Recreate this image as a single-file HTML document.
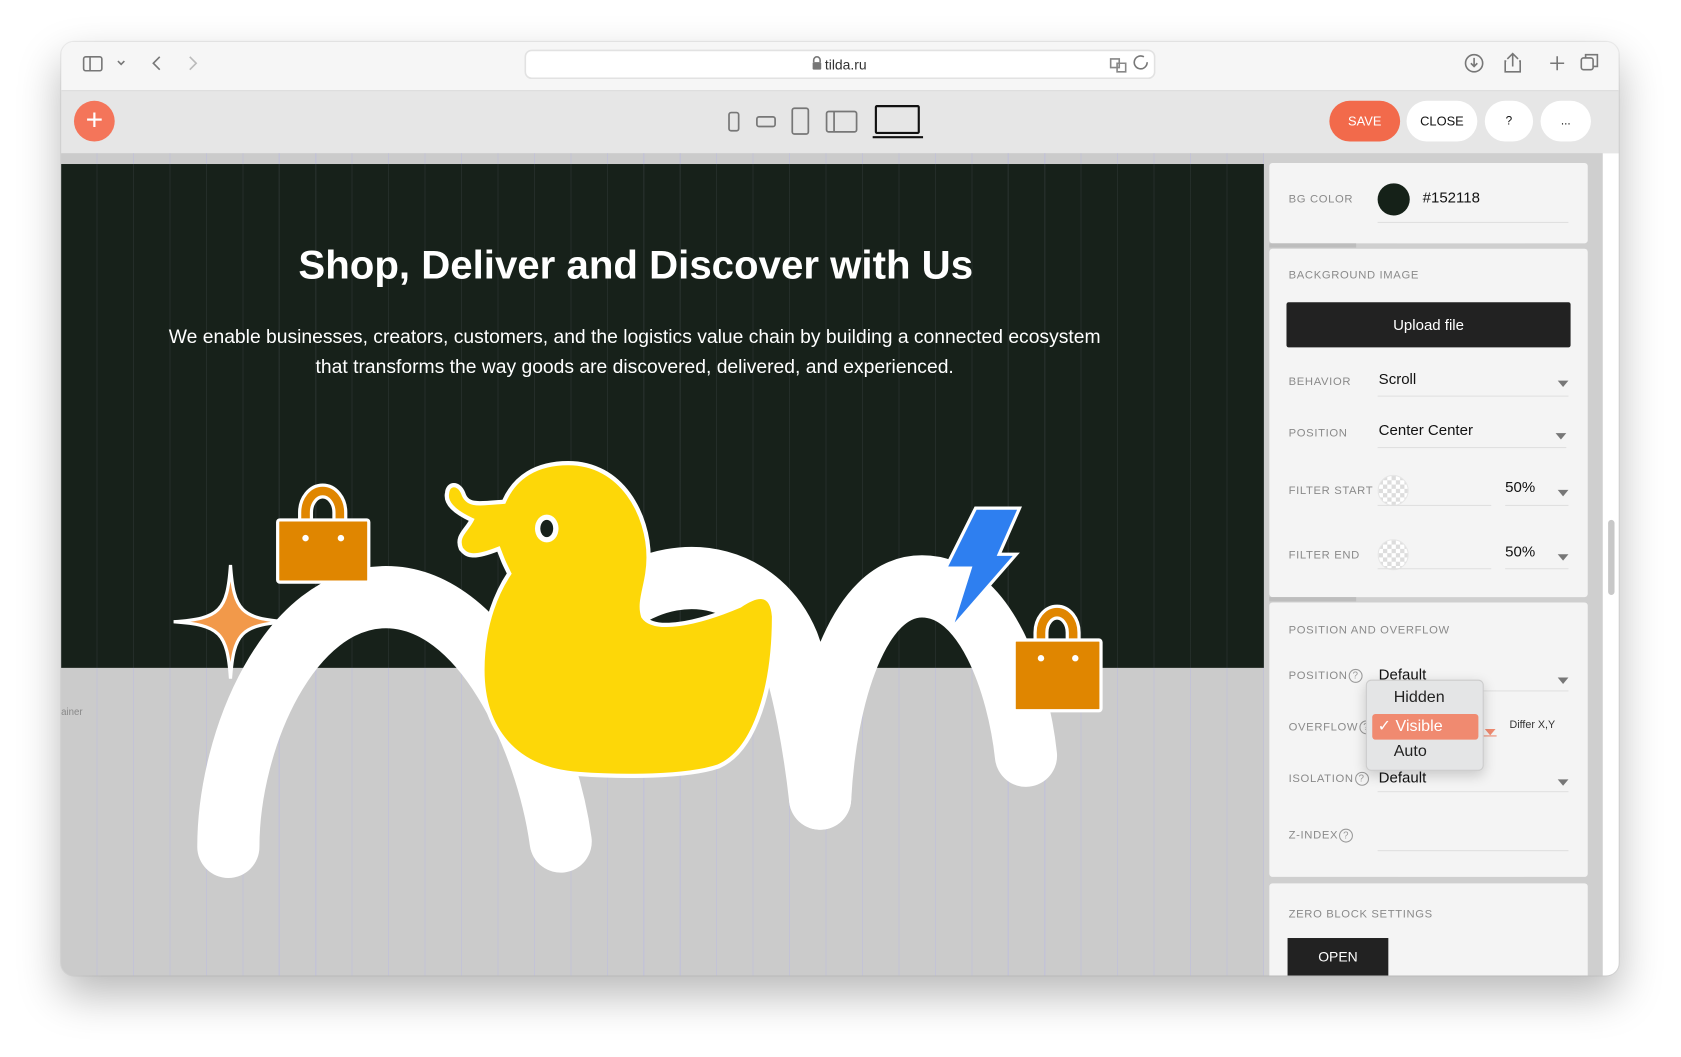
<!DOCTYPE html>
<html><head><meta charset="utf-8"><style>
*{box-sizing:border-box;margin:0;padding:0}
html,body{width:1681px;height:1057px;overflow:hidden;background:#fff;font-family:"Liberation Sans",sans-serif}
#s{position:absolute;left:0;top:0;width:1568px;height:986px;transform:scale(1.07207,1.07201);transform-origin:0 0}
.a{position:absolute}
.win{left:57px;top:39px;width:1453px;height:871px;border-radius:12px;overflow:hidden;box-shadow:0 18px 40px rgba(0,0,0,.28),0 0 0 1px rgba(0,0,0,.06);background:#cfcfcf}
.lbl{position:absolute;left:18px;font-size:10.5px;letter-spacing:.6px;color:#8a8a8a}
.val{position:absolute;left:102px;font-size:14px;color:#111}
.ul{position:absolute;height:1px;background:#e0e0e0}
.arr{position:absolute;width:0;height:0;border-left:5px solid transparent;border-right:5px solid transparent;border-top:6px solid #777}
.card{position:absolute;left:5px;width:297px;background:#f4f4f4;border-radius:3px}
.q{display:inline-block;width:13px;height:13px;border:1px solid #999;border-radius:50%;font-size:9px;text-align:center;line-height:11px;color:#999;vertical-align:middle;margin-left:1px}
.chk{position:absolute;width:29px;height:29px;border-radius:50%;background:repeating-conic-gradient(#ddd 0 25%,#fff 0 50%) 0 0/8px 8px;border:1px solid #e6e6e6}
</style></head><body><div id="s">
<div class="a win">
 <div class="a" style="left:0;top:0;width:1453px;height:46px;background:#f6f6f6;border-bottom:1px solid #ddd"></div>
 <svg class="a" style="left:0;top:0" width="1453" height="46" fill="none" stroke="#777" stroke-width="1.5">
  <rect x="21" y="14" width="17" height="13" rx="2"/><line x1="27" y1="14" x2="27" y2="27"/>
  <path d="M53 18l3 3 3-3"/><path d="M92 14l-6 6 6 6"/><path d="M120 14l6 6-6 6" stroke="#bbb"/>
  <rect x="433" y="8" width="587" height="26" rx="6" fill="#fff" stroke="#e2e2e2"/>
  <rect x="701" y="19" width="8" height="7" rx="1" fill="#777" stroke="none"/><path d="M702 19v-2a3 3 0 0 1 6 0v2"/>
  <circle cx="1318" cy="20" r="8"/><path d="M1318 15v8M1315 20l3 3 3-3"/>
  <path d="M1349 16l5-5 5 5M1354 11v12M1348 18h-1v10h14v-10h-1"/>
  <path d="M1389 20h13M1395.5 13.5v13"/>
  <rect x="1418" y="15" width="11" height="11" rx="2"/><path d="M1422 15v-3h11v11h-4"/>
  <path d="M979 16h8v8h-8zM985 20h8v8h-8z" stroke="#888"/><path d="M1010 14a6 6 0 1 0 3 5" />
 </svg>
 <div class="a" style="left:0;top:14px;width:1453px;text-align:center;font-size:13px;color:#333">&nbsp;&nbsp;&nbsp;tilda.ru</div>
 <div class="a" style="left:0;top:46px;width:1453px;height:58px;background:#e6e6e6"></div>
 <div class="a" style="left:12px;top:55px;width:38px;height:38px;border-radius:50%;background:#f4755a;color:#fff;font-size:28px;line-height:36px;text-align:center">+</div>
 <svg class="a" style="left:600px;top:55px" width="210" height="40" fill="none" stroke="#777" stroke-width="1.6">
  <rect x="23" y="11" width="9" height="17" rx="2"/><rect x="49" y="15" width="17" height="9" rx="2"/>
  <rect x="82" y="7" width="15" height="24" rx="2"/><rect x="114" y="10" width="28" height="19" rx="2"/><line x1="121" y1="10" x2="121" y2="29"/>
  <rect x="160" y="5" width="40" height="25" rx="1" stroke="#111" stroke-width="2"/><line x1="157" y1="34" x2="204" y2="34" stroke="#111" stroke-width="2"/>
 </svg>
 <div class="a" style="left:1183px;top:55px;width:66px;height:38px;border-radius:19px;background:#f26a4b;color:#fff;font-size:12px;line-height:38px;text-align:center">SAVE</div>
 <div class="a" style="left:1255px;top:55px;width:66px;height:38px;border-radius:19px;background:#fff;color:#111;font-size:12px;line-height:38px;text-align:center">CLOSE</div>
 <div class="a" style="left:1328px;top:55px;width:45px;height:38px;border-radius:19px;background:#fff;color:#111;font-size:11px;line-height:38px;text-align:center">?</div>
 <div class="a" style="left:1380px;top:55px;width:47px;height:38px;border-radius:19px;background:#fff;color:#111;font-size:11px;line-height:38px;text-align:center">...</div>
 <div class="a" style="left:0;top:104px;width:1122px;height:767px;background:#cbcbcb;background-image:repeating-linear-gradient(90deg,transparent 0 33px,#c3c3d6 33px 34px)"></div>
 <div class="a" style="left:0;top:114px;width:1122px;height:470px;background:#17211a;background-image:repeating-linear-gradient(90deg,transparent 0 33px,rgba(190,190,220,.08) 33px 34px)"></div>
 <div class="a" style="left:0;top:620px;font-size:9px;color:#888">ainer</div>
 <div class="a" style="left:0;top:187px;width:1072px;text-align:center;color:#fff;font-size:37.5px;font-weight:bold">Shop, Deliver and Discover with Us</div>
 <div class="a" style="left:60px;top:261px;width:950px;text-align:center;color:#fff;font-size:18px;line-height:28px">We enable businesses, creators, customers, and the logistics value chain by building a connected ecosystem<br>that transforms the way goods are discovered, delivered, and experienced.</div>
 <svg class="a" style="left:-57px;top:-39px" width="1200" height="950">
  <path d="M213 790 C213 690 270 557 360 557 C450 557 510 690 523 785" fill="none" stroke="#fff" stroke-width="58" stroke-linecap="round"/>
  <path d="M580 560 C640 520 710 540 735 600 C750 640 760 700 765 745" fill="none" stroke="#fff" stroke-width="58" stroke-linecap="round"/>
  <path d="M765 745 C770 650 800 547 860 547 C920 547 950 640 957 705" fill="none" stroke="#fff" stroke-width="58" stroke-linecap="round"/>
  <path d="M215 527 C218 570 225 577 268 580 C225 583 218 590 215 633 C212 590 205 583 162 580 C205 577 212 570 215 527Z" fill="#f2994a" stroke="#fff" stroke-width="3"/>
  <g stroke="#fff" stroke-width="3"><path d="M285 488v-10a16 20 0 0 1 32 0v10" fill="none" stroke="#fff" stroke-width="14"/><path d="M285 488v-10a16 20 0 0 1 32 0v10" fill="none" stroke="#e08600" stroke-width="8"/>
  <rect x="259" y="485" width="85" height="58" rx="2" fill="#e08600"/></g>
  <circle cx="285" cy="502" r="3" fill="#fff"/><circle cx="318" cy="502" r="3" fill="#fff"/>
  <g stroke="#fff" stroke-width="3"><path d="M971 600v-10a15 19 0 0 1 30 0v10" fill="none" stroke="#fff" stroke-width="14"/><path d="M971 600v-10a15 19 0 0 1 30 0v10" fill="none" stroke="#e08600" stroke-width="8"/>
  <rect x="946" y="597" width="81" height="66" rx="2" fill="#e08600"/></g>
  <circle cx="971" cy="614" r="3" fill="#fff"/><circle cx="1003" cy="614" r="3" fill="#fff"/>
  <path d="M910 474 L951 474 L932 517 L948 517 L887 587 L905 530 L882 530Z" fill="#2e7ff0" stroke="#fff" stroke-width="3"/>
  <path d="M470 468 C480 445 500 432 530 432 C580 432 605 480 605 520 C605 545 595 560 600 575 C610 590 650 582 690 565 C705 555 720 550 722 575 C722 640 705 700 670 715 C640 725 580 725 540 722 C480 718 450 680 450 625 C450 580 465 550 475 535 C470 525 470 525 465 512 C440 522 435 518 430 512 C425 500 435 495 440 485 C425 478 415 470 417 460 C418 450 428 450 432 460 C436 472 445 470 470 468Z" fill="#fdd708" stroke="#fff" stroke-width="4"/>
  <ellipse cx="510" cy="493" rx="11" ry="13" fill="#fff"/><ellipse cx="510" cy="493" rx="6" ry="8" fill="#17211a"/>
 </svg>
 <div class="a" style="left:1122px;top:104px;width:316px;height:767px;background:#cfcfcf">
  <div class="card" style="top:9px;height:75px">
   <div class="lbl" style="top:28px">BG COLOR</div>
   <div class="a" style="left:101px;top:19px;width:30px;height:30px;border-radius:50%;background:#152118"></div>
   <div class="val" style="left:143px;top:24px">#152118</div>
   <div class="ul" style="left:101px;top:55px;width:178px"></div>
  </div>
  <div class="a" style="left:5px;top:84px;width:81px;height:4px;background:#bdbdbd"></div>
  <div class="card" style="top:89px;height:325px">
   <div class="lbl" style="top:19px">BACKGROUND IMAGE</div>
   <div class="a" style="left:16px;top:50px;width:265px;height:42px;background:#222;border-radius:2px;color:#fff;font-size:14px;text-align:center;line-height:42px">Upload file</div>
   <div class="lbl" style="top:118px">BEHAVIOR</div><div class="val" style="top:113px">Scroll</div><div class="arr" style="left:269px;top:123px"></div><div class="ul" style="left:101px;top:137px;width:178px"></div>
   <div class="lbl" style="top:166px">POSITION</div><div class="val" style="top:161px">Center Center</div><div class="arr" style="left:267px;top:172px"></div><div class="ul" style="left:101px;top:185px;width:176px"></div>
   <div class="lbl" style="top:220px">FILTER START</div><div class="chk" style="left:101px;top:211px"></div><div class="val" style="left:220px;top:214px">50%</div><div class="arr" style="left:269px;top:225px"></div>
   <div class="ul" style="left:101px;top:239px;width:106px"></div><div class="ul" style="left:220px;top:239px;width:59px"></div>
   <div class="lbl" style="top:280px">FILTER END</div><div class="chk" style="left:101px;top:271px"></div><div class="val" style="left:220px;top:274px">50%</div><div class="arr" style="left:269px;top:285px"></div>
   <div class="ul" style="left:101px;top:298px;width:106px"></div><div class="ul" style="left:220px;top:298px;width:59px"></div>
  </div>
  <div class="a" style="left:5px;top:414px;width:81px;height:4px;background:#bdbdbd"></div>
  <div class="card" style="top:419px;height:256px">
   <div class="lbl" style="top:20px">POSITION AND OVERFLOW</div>
   <div class="lbl" style="top:62px">POSITION<span class="q">?</span></div><div class="val" style="top:59px">Default</div><div class="arr" style="left:269px;top:70px"></div><div class="ul" style="left:101px;top:82px;width:178px"></div>
   <div class="lbl" style="top:110px">OVERFLOW<span class="q">?</span></div><div class="arr" style="left:201px;top:118px;border-top-color:#f08a70"></div><div class="a" style="left:196px;top:124px;width:16px;height:1px;background:#f08a70"></div>
   <div class="a" style="left:224px;top:109px;font-size:10px;color:#333">Differ X,Y</div>
   <div class="lbl" style="top:158px">ISOLATION<span class="q">?</span></div><div class="val" style="top:155px">Default</div><div class="arr" style="left:269px;top:165px"></div><div class="ul" style="left:101px;top:176px;width:178px"></div>
   <div class="lbl" style="top:211px">Z-INDEX<span class="q">?</span></div><div class="ul" style="left:101px;top:231px;width:178px"></div>
  </div>
  <div class="card" style="top:681px;height:90px">
   <div class="lbl" style="top:23px">ZERO BLOCK SETTINGS</div>
   <div class="a" style="left:17px;top:51px;width:94px;height:40px;background:#222;color:#fff;font-size:13px;text-align:center;line-height:36px">OPEN</div>
  </div>
  <div class="a" style="left:95px;top:491px;width:110px;height:85px;background:#e4e5e6;border:1px solid #ccc;border-radius:5px;box-shadow:0 4px 12px rgba(0,0,0,.18)">
   <div class="a" style="left:25px;top:7px;font-size:15px;color:#222">Hidden</div>
   <div class="a" style="left:5px;top:31px;width:99px;height:24px;background:#f08a70;border-radius:3px;color:#fff;font-size:15px;line-height:23px;padding-left:5px">✓ Visible</div>
   <div class="a" style="left:25px;top:57px;font-size:15px;color:#222">Auto</div>
  </div>
 </div>
 <div class="a" style="left:1438px;top:104px;width:15px;height:767px;background:#fff"></div>
 <div class="a" style="left:1443px;top:446px;width:6px;height:70px;border-radius:3px;background:#c8c8c8"></div>
</div>
</div></body></html>
